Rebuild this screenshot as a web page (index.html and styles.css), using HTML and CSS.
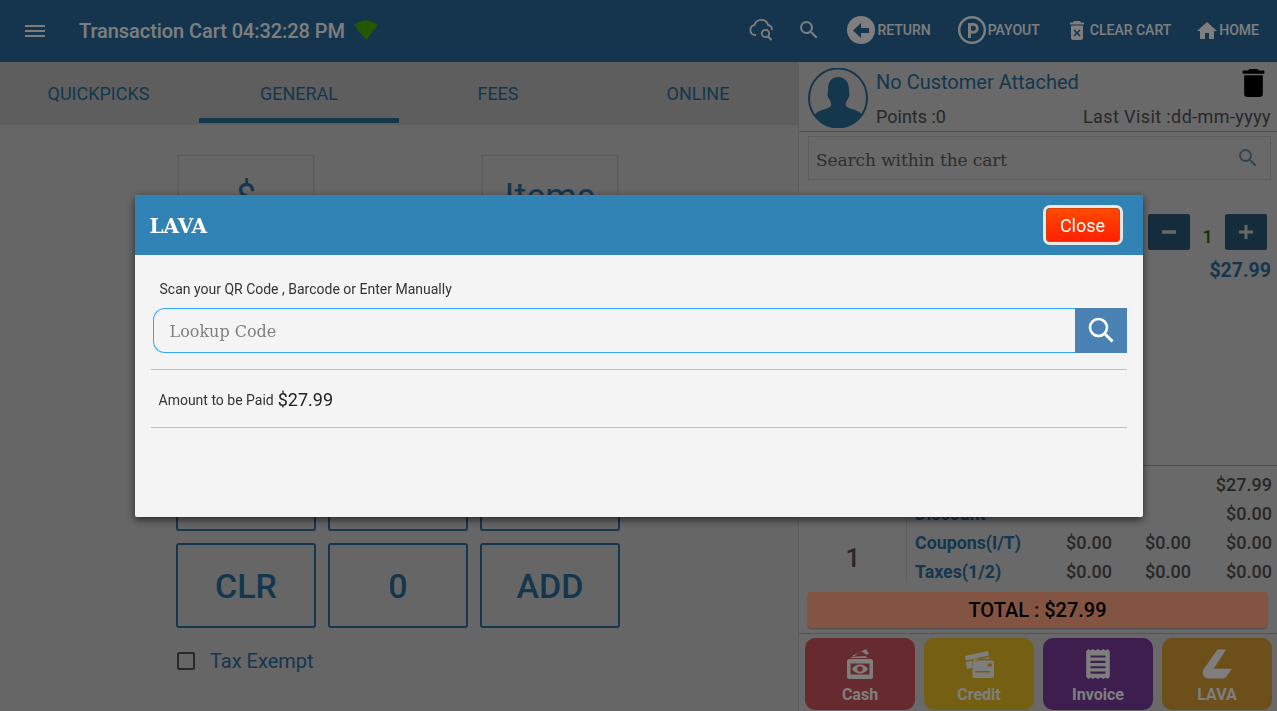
FILE: index.html
```html
<!DOCTYPE html>
<html lang="en">
<head>
<meta charset="utf-8">
<title>Transaction Cart</title>
<link rel="stylesheet" href="styles.css">
</head>
<body>
<div class="app">
  <header class="topbar">
    <svg class="menu-icon" viewBox="0 0 20 12"><path d="M0 0h20v2H0zM0 5h20v2H0zM0 10h20v2H0z"/></svg>
    <div class="title">Transaction Cart 04:32:28 PM</div>
    <svg class="wifi" viewBox="0 0 26 20"><path d="M13 20 1 5C8-1 18-1 25 5z"/></svg>
    <div class="actions">
      <svg class="cloud" viewBox="0 0 25 24"><path d="M7 17H6a5 5 0 0 1-.5-9.900A7 7 0 0 1 19 7a5 5 0 0 1 4 5" fill="none" stroke-width="1.800"/><circle cx="16.500" cy="15.500" r="3.700" fill="none" stroke-width="1.800"/><path d="m19 18.500 3.500 3.500" fill="none" stroke-width="2"/></svg>
      <svg class="search" viewBox="3 3 18 18"><path d="M15.500 14h-.79l-.28-.27A6.470 6.470 0 0 0 16 9.500 6.500 6.500 0 1 0 9.500 16c1.610 0 3.090-.59 4.230-1.570l.27.28v.79l5 4.990L20.490 19l-4.990-5zm-6 0C7.010 14 5 11.990 5 9.500S7.010 5 9.500 5 14 7.010 14 9.500 11.990 14 9.500 14z"/></svg>
      <div class="action action-return">
        <svg class="round" viewBox="0 0 28 28"><circle cx="14" cy="14" r="14"/><path class="cut" d="M14 7v5h8v5h-8v5l-8-7.500z"/></svg>
        <span>RETURN</span>
      </div>
      <div class="action action-payout">
        <svg class="round" viewBox="0 0 28 28"><circle cx="14" cy="14" r="12.800" fill="none" stroke-width="2.400"/><path d="M10 7h5.500a5 5 0 0 1 0 10.500H13V22h-3zm3 2.700v5.100h2.300a2.550 2.550 0 0 0 0-5.100z" fill-rule="evenodd"/></svg>
        <span>PAYOUT</span>
      </div>
      <div class="action action-clear">
        <svg class="clear-icon" viewBox="0 0 14 19"><path fill-rule="evenodd" d="M4 0h6l1 1.500h3v2H0v-2h3zM1 4.500h12V17a2 2 0 0 1-2 2H3a2 2 0 0 1-2-2zm3.600 4L3.500 9.600 5.900 12l-2.400 2.400 1.100 1.100L7 13.100l2.400 2.400 1.100-1.100L8.100 12l2.400-2.400-1.100-1.100L7 10.900z"/></svg>
        <span>CLEAR CART</span>
      </div>
      <div class="action action-home">
        <svg class="home-icon" viewBox="2 3 20 17"><path d="M10 20v-6h4v6h5v-8h3L12 3 2 12h3v8z"/></svg>
        <span>HOME</span>
      </div>
    </div>
  </header>

  <main class="content">
    <section class="left">
      <nav class="tabs">
        <div class="tab tab-first">QUICKPICKS</div>
        <div class="tab tab-active">GENERAL</div>
        <div class="tab tab-fees">FEES</div>
        <div class="tab">ONLINE</div>
      </nav>
      <div class="tender">
        <div class="summary-box">$</div>
        <div class="summary-box">Items</div>
      </div>
      <div class="keypad">
        <div class="key"></div><div class="key"></div><div class="key"></div>
        <div class="key"></div><div class="key"></div><div class="key"></div>
        <div class="key"></div><div class="key"></div><div class="key"></div>
        <div class="key">CLR</div><div class="key">0</div><div class="key">ADD</div>
      </div>
      <label class="tax">
        <span class="checkbox"></span>
        <span>Tax Exempt</span>
      </label>
    </section>

    <aside class="right">
      <div class="customer">
        <svg class="avatar" viewBox="0 0 60 60">
          <defs><clipPath id="avatar-clip"><ellipse cx="30" cy="30" rx="29" ry="29.500"/></clipPath></defs>
          <ellipse cx="30" cy="30" rx="29" ry="29.500" fill="none" stroke-width="2"/>
          <g clip-path="url(#avatar-clip)"><path d="M30 9c7 0 11 5 11 13 0 3 1 4 0 7-1 2-2 3-3 6-.5 2 0 4 3 5 5 2 12 3 14 8 1 3 1 7 1 12H5c0-5 0-9 1-12 2-5 9-6 14-8 3-1 3.500-3 3-5-1-3-2-4-3-6-1-3 0-4 0-7 0-8 3-13 10-13z"/></g>
        </svg>
        <div class="customer-info">
          <div class="customer-top">
            <span class="customer-name">No Customer Attached</span>
            <svg class="delete-icon" viewBox="5 3 14 18"><path d="M6 19c0 1.100.9 2 2 2h8c1.100 0 2-.9 2-2V7H6v12zM19 4h-3.500l-1-1h-5l-1 1H5v2h14V4z"/></svg>
          </div>
          <div class="customer-bottom">
            <span>Points :0</span>
            <span class="last-visit">Last Visit :dd-mm-yyyy</span>
          </div>
        </div>
      </div>
      <div class="cart-search">
        <span>Search within the cart</span>
        <svg viewBox="3 3 18 18"><path d="M15.500 14h-.79l-.28-.27A6.470 6.470 0 0 0 16 9.500 6.500 6.500 0 1 0 9.500 16c1.610 0 3.090-.59 4.230-1.570l.27.28v.79l5 4.990L20.490 19l-4.990-5zm-6 0C7.010 14 5 11.990 5 9.500S7.010 5 9.500 5 14 7.010 14 9.500 11.990 14 9.500 14z"/></svg>
      </div>
      <div class="cart-list">
        <div class="qty-row">
          <div class="qty-btn">
            <svg viewBox="0 0 12 12"><path d="M0 4.500h12v3H0z"/></svg>
          </div>
          <span class="qty">1</span>
          <div class="qty-btn">
            <svg viewBox="0 0 14 14"><path d="M5.500 0h3v5.500H14v3H8.500V14h-3V8.500H0v-3h5.500z"/></svg>
          </div>
        </div>
        <div class="line-price">$27.99</div>
      </div>
      <div class="totals">
        <div class="count">1</div>
        <div class="breakdown">
          <div class="row"><span></span><span></span><span></span><span class="val">$27.99</span></div>
          <div class="row"><span class="label">Discount</span><span></span><span></span><span class="val">$0.00</span></div>
          <div class="row"><span class="label">Coupons(I/T)</span><span class="val">$0.00</span><span class="val">$0.00</span><span class="val">$0.00</span></div>
          <div class="row"><span class="label">Taxes(1/2)</span><span class="val">$0.00</span><span class="val">$0.00</span><span class="val">$0.00</span></div>
        </div>
      </div>
      <div class="total-bar">TOTAL : $27.99</div>
      <div class="pay-row">
        <div class="pay pay-cash">
          <svg viewBox="0 0 28 30"><path d="m6 7 14-7 3 5-3 .5-5-3.500L8 7.500zM5 8l14-1 3 2H5z"/><path fill-rule="evenodd" d="M3 10h22a2 2 0 0 1 2 2v16a2 2 0 0 1-2 2H3a2 2 0 0 1-2-2V12a2 2 0 0 1 2-2zm1.500 4.500v11h19v-11zM14 15.500c4 0 7 2.500 8 4.500-1 2-4 4.500-8 4.500S7 22 6 20c1-2 4-4.500 8-4.500zm0 1.800a2.700 2.700 0 1 0 0 5.400 2.700 2.700 0 0 0 0-5.400z"/></svg>
          <span>Cash</span>
        </div>
        <div class="pay pay-credit">
          <svg class="wide" viewBox="0 0 30 28"><path d="m1 6 23-5 .8 4.500-23 5zM1.800 12l23-5 .3 1.800H12a4 4 0 0 0-4 4V18l-5 1z"/><path fill-rule="evenodd" d="M10.500 10.500H28a2 2 0 0 1 2 2V26a2 2 0 0 1-2 2H10.500a2 2 0 0 1-2-2V12.500a2 2 0 0 1 2-2zm13 3v3H28v-3zM11 21v1.500h15V21z"/></svg>
          <span>Credit</span>
        </div>
        <div class="pay pay-invoice">
          <svg viewBox="0 0 22 28"><path fill-rule="evenodd" d="M0 2 2 0l2 1.500L6 0l2.500 1.500L11 0l2.500 1.500L16 0l2 1.500L20 0l2 2v24l-2 2-2-1.500-2 1.500-2.500-1.500L11 28l-2.500-1.500L6 28l-2-1.500L2 28l-2-2zm4 4v2h14V6zm0 5v2h14v-2zm0 5v2h14v-2zm0 5v2h14v-2z"/></svg>
          <span>Invoice</span>
        </div>
        <div class="pay pay-lava">
          <svg class="wide" viewBox="0 0 31 30"><path d="M16 0h9L12 20h19l-5 7c-1.300 2-3 3-5 3H7c-5 0-8-5-5-10z"/></svg>
          <span>LAVA</span>
        </div>
      </div>
    </aside>
  </main>
</div>

<div class="overlay">
  <div class="modal">
    <div class="modal-head">
      <h2>LAVA</h2>
      <button class="close"><span>Close</span></button>
    </div>
    <div class="modal-body">
      <p class="scan-label">Scan your QR Code , Barcode or Enter Manually</p>
      <div class="lookup">
        <div class="lookup-input">Lookup Code</div>
        <div class="lookup-btn">
          <svg viewBox="0 0 26 26"><circle cx="10.500" cy="10.500" r="8.500" fill="none" stroke-width="2.600"/><path d="m16.500 16.500 8 8" fill="none" stroke-width="3"/></svg>
        </div>
      </div>
      <div class="amount"><span class="amount-label">Amount to be Paid</span> <span class="amount-val">$27.99</span></div>
    </div>
  </div>
</div>
</body>
</html>
```

FILE: styles.css
```css
* { box-sizing: border-box; }
html, body { margin: 0; padding: 0; }
body {
  width: 1277px;
  height: 711px;
  overflow: hidden;
  font-family: Roboto, "Liberation Sans", sans-serif;
  background: #bababa;
}
button { font-family: inherit; padding: 0; }

.app { width: 1277px; height: 711px; display: flex; flex-direction: column; }

.topbar {
  height: 62px;
  flex: none;
  background: #26628c;
  display: flex;
  align-items: center;
  color: #e6e6e6;
  fill: #e6e6e6;
}
.menu-icon { width: 20px; height: 12px; margin-left: 25px; }
.title { margin-left: 34px; font-size: 20px; font-weight: 500; letter-spacing: -.07px; white-space: nowrap; }
.wifi { width: 26px; height: 20px; margin-left: 8px; margin-top: -2px; fill: #409f00; }
.actions { margin-left: auto; display: flex; align-items: center; padding: 0 18px 2px 0; }
.topbar .cloud { width: 25px; height: 24px; stroke: #e6e6e6; fill: none; margin-right: 26px; }
.search { width: 18px; height: 18px; margin-right: 29px; }
.action { display: flex; align-items: center; font-size: 14px; font-weight: 500; }
.round { width: 28px; height: 28px; margin-right: 2px; }
.round .cut { fill: #26628c; }
.action-payout circle { stroke: #e6e6e6; }
.action-return { margin-right: 27px; }
.action-payout { margin-right: 30px; }
.clear-icon { width: 14px; height: 19px; margin-right: 6px; }
.action-clear { margin-right: 26px; }
.home-icon { width: 20px; height: 17px; margin-right: 2px; }

.content { flex: 1; min-height: 0; display: flex; }

.left { width: 799px; flex: none; border-right: 1px solid #aaa; display: flex; flex-direction: column; align-items: center; }
.tabs { width: 100%; height: 63px; background: #ababab; display: grid; grid-template-columns: 199px 200px 200px 198px; }
.tab { display: flex; align-items: center; justify-content: center; color: #27648f; font-size: 18px; }
.tab-first { padding-right: 2px; }
.tab-fees { padding-right: 2px; }
.tab-active { position: relative; }
.tab-active::after { content: ""; position: absolute; left: 0; right: 0; bottom: 2px; height: 5px; background: #27648f; }

.tender { width: 440px; margin: 30px 2px 0 0; height: 97px; flex: none; display: flex; justify-content: space-between; }
.summary-box {
  width: 136px;
  height: 82px;
  border: 1px solid #a5a5a5;
  box-shadow: 0 1px 2px rgba(0,0,0,.15);
  display: flex;
  justify-content: center;
  padding-top: 20px;
  font-size: 36px;
  color: #27648f;
}

.keypad { width: 444px; margin-right: 2px; display: grid; grid-template-columns: repeat(3, 140px); grid-auto-rows: 85px; gap: 12px; }
.key {
  border: 2px solid #27648f;
  border-radius: 3px;
  color: #27648f;
  font-size: 34px;
  font-weight: 500;
  display: flex;
  align-items: center;
  justify-content: center;
}
.tax { width: 444px; margin: 21px 2px 0 0; padding-left: 1px; display: flex; align-items: center; gap: 15px; color: #27648f; font-size: 20px; }
.checkbox { width: 18px; height: 18px; border: 2px solid #4a4a4a; border-radius: 2px; }

.right { flex: 1; min-width: 0; display: flex; flex-direction: column; background: #bfbfbf; }
.customer { height: 70px; flex: none; display: flex; padding: 6px 6px 0 9px; border-bottom: 1px solid #8e8e8e; }
.avatar { width: 60px; height: 60px; flex: none; fill: #27648f; stroke: #27648f; }
.avatar g { stroke: none; }
.customer-info { flex: 1; margin-left: 8px; display: flex; flex-direction: column; }
.customer-top { display: flex; justify-content: space-between; height: 36px; }
.customer-name { color: #27648f; font-size: 20px; line-height: 28px; }
.delete-icon { width: 23px; height: 28px; margin-right: 6px; fill: #000; margin-top: 1px; }
.customer-bottom { display: flex; justify-content: space-between; font-size: 18px; color: #4a4a4a; line-height: 26px; }
.last-visit { letter-spacing: .4px; }
.cart-search {
  margin: 4px 6px 0 9px;
  height: 44px;
  flex: none;
  border: 1px solid #aaa;
  display: flex;
  align-items: center;
  justify-content: space-between;
  padding: 4px 13px 0 7px;
  font-family: "DejaVu Serif", serif;
  font-size: 17px;
  letter-spacing: -.1px;
  color: #555;
}
.cart-search svg { width: 18px; height: 18px; fill: #5d7e96; margin-top: -4px; }
.cart-list { flex: none; height: 286px; padding-top: 34px; border-bottom: 1px solid #8e8e8e; }
.qty-row { display: flex; justify-content: flex-end; align-items: center; padding-right: 10px; }
.qty-btn { width: 42px; height: 36px; border-radius: 2px; background: #26506e; display: flex; align-items: center; justify-content: center; }
.qty-btn svg { width: 14px; height: 14px; fill: #bfbfbf; }
.qty { width: 35px; text-align: center; color: #1f5d00; font-size: 18px; font-weight: 500; padding-top: 8px; }
.line-price { text-align: right; padding-right: 6px; margin-top: 9px; color: #27648f; font-size: 19.500px; font-weight: 700; }

.totals { height: 116px; flex: none; display: flex; }
.count { width: 107px; flex: none; padding-top: 77px; padding-left: 1px; text-align: center; font-size: 26px; font-weight: 500; color: #4a4a4a; }
.breakdown { flex: 1; padding: 4px 5px 0 8px; border-left: 1px solid #aaa; }
.row { display: grid; grid-template-columns: 106px 91px 79px 1fr; height: 29px; align-items: center; font-size: 18px; }
.label { color: #27648f; font-weight: 700; white-space: nowrap; font-size: 17.800px; }
.val { text-align: right; color: #4a4a4a; font-weight: 500; }

.total-bar {
  margin: 10px 10px 0 9px;
  height: 36px;
  flex: none;
  border-radius: 3px;
  background: #f09a78;
  box-shadow: 0 1px 2px rgba(0,0,0,.3);
  display: flex;
  align-items: center;
  justify-content: center;
  font-size: 20px;
  font-weight: 500;
  color: #000;
}
.pay-row {
  margin-top: 5px;
  padding: 4px 5px 0 6px;
  border-top: 1px solid #9a9a9a;
  display: flex;
  justify-content: space-between;
}
.pay {
  width: 110px;
  height: 72px;
  border-radius: 10px;
  display: flex;
  flex-direction: column;
  align-items: center;
  color: #e6e6e6;
  fill: #e6e6e6;
  font-size: 16px;
  font-weight: 700;
  padding-top: 11px;
}
.pay svg { height: 30px; width: 28px; margin-bottom: 6px; flex: none; }
.pay svg.wide { width: 30px; }
.pay-cash { background: #bb4e56; }
.pay-credit { background: #d4ae22; }
.pay-invoice { background: #723690; }
.pay-lava { background: #c5902f; }

.overlay {
  position: fixed;
  inset: 0;
  background: rgba(0,0,0,.45);
  display: flex;
  align-items: center;
  justify-content: center;
}
.modal {
  width: 1008px;
  height: 322px;
  background: #f4f4f4;
  box-shadow: 0 3px 9px rgba(0,0,0,.6);
  border-radius: 0 0 2px 2px;
}
.modal-head {
  height: 60px;
  background: #3182b5;
  display: flex;
  align-items: center;
  justify-content: space-between;
  padding: 0 20px 0 15px;
}
.modal-head h2 { margin: 2px 0 0; font-family: "DejaVu Serif", serif; font-size: 20px; font-weight: 700; color: #fff; }
.close {
  width: 80px;
  height: 40px;
  border: 3px solid #e8e8e8;
  border-radius: 7px;
  background: transparent;
}
.close span {
  display: flex;
  align-items: center;
  justify-content: center;
  width: 100%;
  height: 100%;
  padding-top: 1px;
  border: 1px solid #d94500;
  border-radius: 4px;
  background: linear-gradient(#ff4a00, #ff2000);
  color: #fff;
  font-size: 18px;
}
.modal-body { padding: 25px 16px 0 16px; }
.scan-label { margin: 0 0 10px 8px; padding-left: 1px; font-size: 14px; line-height: 18px; color: #333; }
.lookup { display: flex; height: 45px; margin-left: 2px; }
.lookup-input {
  flex: 1;
  border: 1px solid #2ea8fb;
  border-right: 0;
  border-radius: 12px 0 0 12px;
  display: flex;
  align-items: center;
  padding: 2px 0 0 16px;
  font-family: "DejaVu Serif", serif;
  font-size: 16px;
  color: #808080;
}
.lookup-btn { width: 52px; background: #4a82b4; display: flex; align-items: center; justify-content: center; }
.lookup-btn svg { width: 26px; height: 26px; stroke: #fff; }
.amount {
  margin-top: 16px;
  height: 59px;
  border-top: 1px solid #c0c0c0;
  border-bottom: 1px solid #c0c0c0;
  display: flex;
  align-items: center;
  gap: 4px;
  padding: 2px 0 0 8px;
  color: #333;
}
.amount-label { font-size: 14px; margin-top: 2px; }
.amount-val { font-size: 18px; color: #222; }
```
